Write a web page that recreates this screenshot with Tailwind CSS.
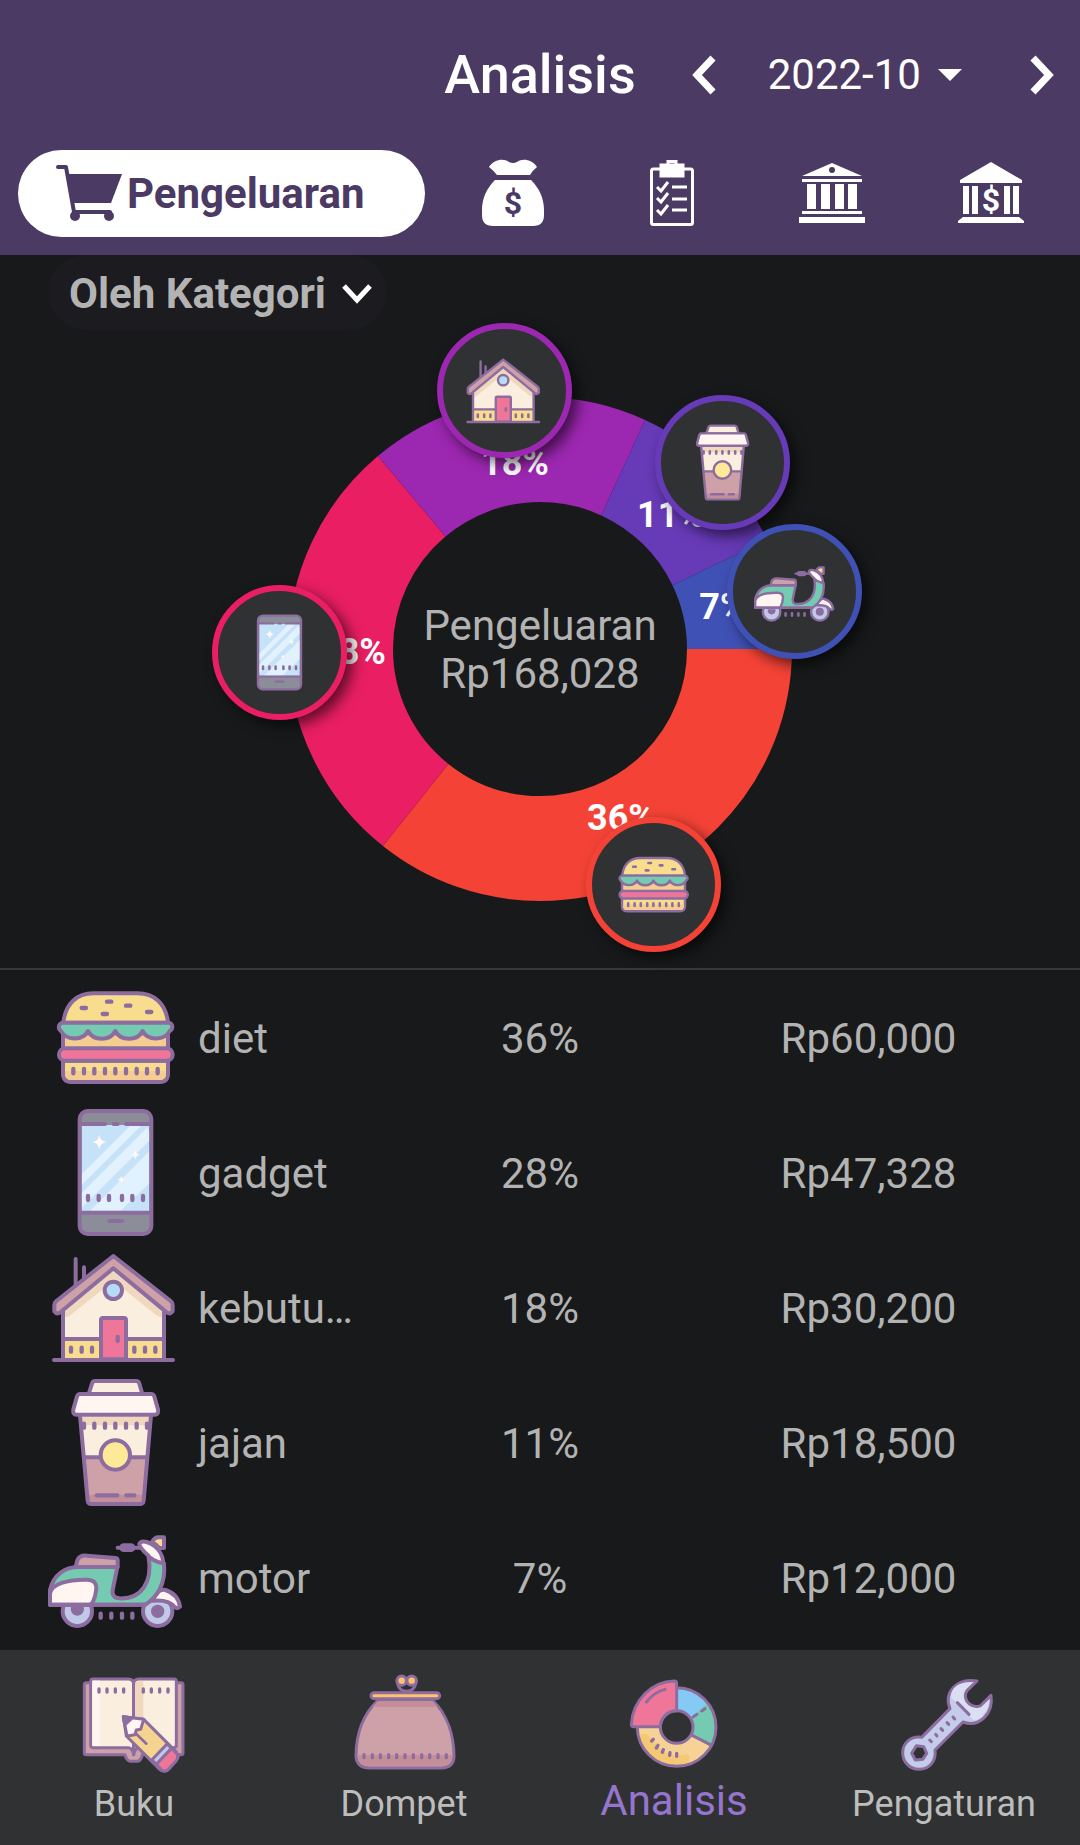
<!DOCTYPE html>
<html lang="id">
<head>
    <meta charset="UTF-8">
    <meta name="viewport" content="width=device-width, initial-scale=1.0">
    <title>Analisis</title>
    <script src="https://cdn.jsdelivr.net/npm/@tailwindcss/browser@4"></script>
</head>
<body class="flex min-h-screen flex-col bg-[#18191a] font-[Roboto,sans-serif] text-[42px] leading-[48px] text-[#b3b3b3]">

    <!-- icon sprite -->
    <svg class="absolute h-0 w-0" aria-hidden="true">
        <symbol id="burger" viewBox="54 0 405 405">
            <g stroke="#8d6d9f" stroke-width="12" stroke-linejoin="round" stroke-linecap="round">
                <path d="M99 190H414V240H99Z" fill="#f6cd90"/>
                <path d="M100 158C106 100 142 70 190 70H322C372 70 408 100 414 158Z" fill="#f9dd8f"/>
                <path d="M98 158C84 162 84 176 92 182C108 212 158 214 174 183C190 214 240 214 256 183C272 214 322 214 338 183C354 214 404 212 420 182C430 176 430 162 416 158Z" fill="#74cbb1"/>
                <path d="M99 272V310Q99 336 124 336H389Q414 336 414 310V272Z" fill="#f9dd8f"/>
                <rect x="87" y="235" width="341" height="37" rx="18" fill="#ef7699"/>
            </g>
            <path d="M105 303H408V312Q408 330 389 330H124Q105 330 105 312Z" fill="#f6cd90"/>
            <path d="M155 114h13M231 95h13M288 107h13M218 132h13M351 126h13M130 297v13M162 297v13M193 297v13M225 297v13M256 297v13M288 297v13M320 297v13M351 297v13M383 297v13" stroke="#8d6d9f" stroke-width="13" stroke-linecap="round"/>
        </symbol>
        <symbol id="phone" viewBox="54 405 405 405">
            <rect x="149" y="423" width="215" height="369" rx="24" fill="#8b8e99"/>
            <path d="M155 465H358V724H155Z" fill="#c6e2f8"/>
            <path d="M155 613L302 466H335L155 646ZM155 669L352 472L358 486V512L155 713ZM180 722L358 544V640L272 722Z" fill="#e1f1fe"/>
            <path d="M208 494Q211 513 230 516Q211 519 208 538Q205 519 186 516Q205 513 208 494ZM316 539Q318 552 330 554Q318 556 316 569Q314 556 302 554Q314 552 316 539ZM274 618Q276 627 285 629Q276 631 274 639Q272 631 264 629Q272 627 274 618Z" fill="#fff8f3"/>
            <g fill="none" stroke="#8d6d9f" stroke-width="12" stroke-linecap="round">
                <rect x="149" y="423" width="215" height="369" rx="24"/>
                <path d="M150 462H225M251 462h12M288 462H363M150 728H363M238 753h38"/>
                <path d="M174 678v12M206 678v12M237 678v12M276 678v12M307 678v12M339 678v12" stroke-width="13"/>
            </g>
        </symbol>
        <symbol id="house" viewBox="54 0 405 405">
            <path d="M99 205L250 85L402 205V358H99Z" fill="#faeede"/>
            <path d="M105 205L250 88L396 205V230Q388 234 378 225L250 122L122 225Q112 234 105 230Z" fill="#f0d8bf"/>
            <path d="M105 300H396V358H105Z" fill="#f9dd8f"/>
            <g fill="none" stroke="#8d6d9f" stroke-width="12" stroke-linejoin="round" stroke-linecap="round">
                <path d="M99 210V358M402 210V358M99 297H402M137 57V135M162 82V115"/>
                <path d="M250 48L422 183Q428 188 428 195V214Q420 224 410 217L250 85L91 217Q80 224 73 214V195Q73 188 79 183Z" fill="#cda1a7"/>
                <path d="M213 358V240Q213 234 219 234H282Q288 234 288 240V358Z" fill="#ef7699"/>
                <circle cx="250" cy="151" r="26" fill="#b5dbf7"/>
                <path d="M72 360H429"/>
                <path d="M263 291v12M123 323v12M155 323v12M186 323v12M313 323v12M345 323v12M376 323v12" stroke-width="13"/>
            </g>
        </symbol>
        <symbol id="cup" viewBox="54 405 405 405">
            <path d="M150 526L173 792H341L363 526Z" fill="#faeede"/>
            <path d="M155 530H358L357 556H158Z" fill="#f0d8bf"/>
            <path d="M162 652H352L341 788H173Z" fill="#cda1a7"/>
            <path d="M176 764H338L337 786H177Z" fill="#c48f99"/>
            <g fill="none" stroke="#8d6d9f" stroke-width="12" stroke-linejoin="round" stroke-linecap="round">
                <path d="M150 526L173 782Q174 792 182 792H332Q340 792 341 782L363 526M162 652H352"/>
                <path d="M176 462L186 431Q188 423 196 423H318Q326 423 328 431L337 462Z" fill="#faeede"/>
                <path d="M150 462H364Q370 462 373 469L384 508Q387 524 374 524H140Q127 524 130 508L141 469Q144 462 150 462Z" fill="#fff6f1"/>
                <circle cx="256" cy="645" r="44" fill="#fee999"/>
                <path d="M162 551v12M193 551v12M225 551v12M256 551v12M288 551v12M320 551v12M351 551v12M200 766h62M289 766h24" stroke-width="13"/>
            </g>
        </symbol>
        <symbol id="scooter" viewBox="54 0 405 405">
            <g fill="#c0c9e8" stroke="#8d6d9f" stroke-width="12" stroke-linejoin="round" stroke-linecap="round">
                <circle cx="142" cy="304" r="44"/>
                <circle cx="383" cy="304" r="44"/>
                <path d="M368 270Q382 236 406 240Q444 252 450 290Q442 298 434 291Q416 268 368 272Z" fill="#fff6f1"/>
                <path d="M60 284V240C70 195 105 171 145 171H262L248 240Q245 264 268 265C335 268 368 215 356 142L402 160C408 220 382 262 346 284Z" fill="#74cbb1"/>
                <path d="M60 284V250C66 222 110 208 172 209Q198 210 199 232Q197 258 190 272Q186 284 178 284Z" fill="#fff6f1"/>
                <path d="M137 171L142 151Q149 135 170 137L256 144Q263 145 263 151V171Z" fill="#cda1a7"/>
                <path d="M328 102Q332 92 350 96C380 106 398 130 400 160Q364 152 354 136Q330 114 328 102Z" fill="#fff6f1"/>
                <path d="M366 96Q374 82 384 82H402V114H388Q378 102 366 96Z" fill="#f9dd8f"/>
                <path d="M263 113H330"/>
                <path d="M281 113h22" stroke-width="26"/>
                <path d="M60 284H346"/>
                <path d="M212 311v12M244 311v12M276 311v12M307 311v12" stroke-width="13"/>
            </g>
            <path d="M123 291H161A20 20 0 1 1 123 291ZM363 304A20 20 0 1 1 403 304A20 20 0 1 1 363 304Z" fill="#8d6d9f"/>
        </symbol>
        <symbol id="book" viewBox="127 93 315 315">
            <g fill="#cda1a7" stroke="#8d6d9f" stroke-width="9" stroke-linejoin="round" stroke-linecap="round">
                <path d="M141 128H424Q430 128 430 134V338Q430 344 424 344H308Q304 364 292 364H272Q260 362 256 344H140Q134 344 134 338V134Q134 128 141 128Z"/>
                <path d="M153 124Q153 117 160 117H266Q281 117 282 132V344Q278 323 266 323H160Q153 323 153 316Z" fill="#faeede"/>
                <path d="M410 124Q410 117 403 117H298Q283 117 282 132V344Q286 323 298 323H403Q410 323 410 316Z" fill="#faeede"/>
            </g>
            <path d="M158 122H180V318H158Z" fill="#fff6f1"/>
            <path d="M288 124H311V235H288Z" fill="#f0d8bf"/>
            <path d="M178 147v9M202 147v9M227 147v9M252 147v9M311 147v9M335 147v9M360 147v9M385 147v9" stroke="#8d6d9f" stroke-width="10" stroke-linecap="round"/>
            <g fill="#f5d48f" stroke="#8d6d9f" stroke-width="9" stroke-linejoin="round" stroke-linecap="round">
                <path d="M251 230L312 238L408 334Q420 347 410 360L388 387Q374 400 360 388L260 288Z"/>
                <path d="M251 230L312 238L303 268L290 270L286 284L262 288Z" fill="#fff6f1"/>
                <path d="M251 230L278 234L256 254Z" fill="#8d6d9f"/>
                <path d="M382 312L337 359L350 373L396 325Z" fill="#c0c9e8"/>
                <path d="M396 325L350 373L364 388Q376 398 386 388L410 362Q419 350 410 340Z" fill="#ef7699"/>
                <path d="M290 282L320 311" stroke-width="8"/>
            </g>
        </symbol>
        <symbol id="purse" viewBox="937 93 315 315">
            <g fill="#cda1a7" stroke="#8d6d9f" stroke-width="9" stroke-linejoin="round" stroke-linecap="round">
                <path d="M1016 180C962 230 949 300 949 350Q952 384 990 384H1205Q1242 382 1243 350C1243 290 1225 225 1178 180Z"/>
                <path d="M955 345H1238Q1238 379 1205 379H990Q956 379 955 345ZM1014 184H1180L1194 201H998Z" fill="#c48f99" stroke="none"/>
                <path d="M1072 122Q1076 154 1101 154Q1126 154 1130 122Z" fill="#303133"/>
                <circle cx="1086" cy="122" r="14" fill="#ffc36c"/>
                <circle cx="1116" cy="122" r="14" fill="#ffc36c"/>
                <rect x="994" y="158" width="206" height="18" rx="9" fill="#ffc36c"/>
                <path d="M973 344v9M998 344v9M1022 344v9M1047 344v9M1071 344v9M1096 344v9M1121 344v9M1146 344v9M1170 344v9M1195 344v9M1220 344v9" stroke-width="10"/>
            </g>
        </symbol>
        <symbol id="pie" viewBox="187 93 315 315">
            <g fill="none" stroke="#8d6d9f" stroke-width="9" stroke-linejoin="round" stroke-linecap="round">
                <path d="M352 143A118 118 0 0 1 453 202L394 234A50 50 0 0 0 352 212Z" fill="#84caf5" stroke="none"/>
                <path d="M445 187A118 118 0 0 1 454 318L394 286A50 50 0 0 0 394 236Z" fill="#74cbb1" stroke="none"/>
                <path d="M234 261A117 117 0 0 0 456 315L395 284A50 50 0 0 1 302 261Z" fill="#f7d296" stroke="none"/>
                <path d="M239 284Q262 276 276 296Q318 362 380 342Q398 352 384 370Q330 386 280 352Q248 324 239 284Z" fill="#f4c874" stroke="none"/>
                <circle cx="351" cy="261" r="118"/>
                <circle cx="351" cy="261" r="49"/>
                <path d="M399 287L456 316M400 231l12-8M426 213l10-7"/>
                <path d="M344 123Q351 123 351 130V212A49 49 0 0 0 302 260H222Q214 260 215 252C220 180 275 125 344 123Z" fill="#ef7699"/>
                <path d="M260 186Q284 156 316 148"/>
                <path d="M281 298l-5 5M295 316l-5 8M311 329l-3 8M331 338l-1 8M351 340v9" stroke-width="10"/>
            </g>
        </symbol>
        <symbol id="wrench" viewBox="997 93 315 315">
            <g fill="#c3cce8" stroke="#8d6d9f" stroke-width="9" stroke-linejoin="round" stroke-linecap="round">
                <path d="M1086 292L1171 206C1152 158 1190 112 1252 123L1222 152Q1212 168 1222 184Q1236 204 1262 198L1294 166C1302 220 1260 264 1210 246L1126 330C1130 360 1112 388 1078 388C1050 388 1029 365 1029 338C1029 308 1055 287 1086 292Z"/>
                <path d="M1174 172C1172 142 1200 124 1240 127L1218 148Q1206 168 1217 187Q1236 210 1264 202L1290 178C1286 214 1266 238 1244 242Z" fill="#dadff4" stroke="none"/>
                <path d="M1070 317L1092 320L1101 340L1089 358L1067 360L1056 340Z" fill="#303133"/>
                <path d="M1193 188L1228 223M1110 300l5 5M1128 283l4 5M1144 266l5 5M1162 248l5 5M1180 231l5 6"/>
            </g>
        </symbol>
    </svg>

    <header class="bg-[#4b3a64] pb-[18px] text-white">
        <div class="grid h-[150px] grid-cols-[1fr_auto_1fr] items-center">
            <h1 class="col-start-2 text-[54px] leading-[60px] font-medium">Analisis</h1>
            <div class="flex items-center pr-[26px] pl-14">
                <button type="button" aria-label="Bulan sebelumnya">
                    <svg class="h-10 w-6" viewBox="0 0 24 40" fill="none" stroke="#fff" stroke-width="7"><path d="M21 3L5 20L21 37"/></svg>
                </button>
                <label class="relative ml-[52px]">
                    <select aria-label="Bulan" class="h-16 w-[194px] appearance-none">
                        <option>2022-10</option>
                        <option>2022-09</option>
                    </select>
                    <svg class="pointer-events-none absolute top-[26px] right-0 h-3 w-6" viewBox="0 0 24 12" fill="#fff"><path d="M0 0H24L12 12Z"/></svg>
                </label>
                <button type="button" aria-label="Bulan berikutnya" class="ml-auto">
                    <svg class="h-10 w-6" viewBox="0 0 24 40" fill="none" stroke="#fff" stroke-width="7"><path d="M3 3L19 20L3 37"/></svg>
                </button>
            </div>
        </div>

        <div class="flex pr-[9px] pl-[18px]">
            <button type="button" class="mr-2 flex h-[87px] w-[407px] items-center gap-[3px] rounded-full bg-white pl-[38px] font-bold text-[#4b3a64]">
                <svg class="h-[60px] w-[68px]" viewBox="0 0 68 60" fill="currentColor">
                    <path d="M2 3H10L18 48H54" fill="none" stroke="currentColor" stroke-width="4" stroke-linecap="round" stroke-linejoin="round"/>
                    <path d="M12 10H66L55 39H17Z"/>
                    <circle cx="19" cy="52" r="5"/>
                    <circle cx="53" cy="52" r="5"/>
                </svg>
                Pengeluaran
            </button>
            <button type="button" aria-label="Pemasukan" class="flex flex-1 items-center justify-center pb-1">
                <svg class="size-[72px]" viewBox="0 0 72 72" fill="#fff">
                    <path d="M12 11C17 3 27 2 32 6Q36 8 40 6C45 2 55 3 60 11Q55 15 53 19H20Q17 15 12 11ZM18 24H54C62 32 67 42 67 54V59Q67 70 56 70H16Q5 70 5 59V54C5 42 10 32 18 24Z"/>
                    <text x="36" y="58" font-size="32" font-weight="700" text-anchor="middle" fill="#4b3a64">$</text>
                </svg>
            </button>
            <button type="button" aria-label="Anggaran" class="flex flex-1 items-center justify-center pb-1">
                <svg class="size-[72px]" viewBox="0 0 72 72" fill="none" stroke="#fff" stroke-width="3">
                    <rect x="15.500" y="13" width="41" height="55.500" rx="2"/>
                    <path d="M32 10V5.500H40V10"/>
                    <path d="M25 9H47V20H25Z" fill="#fff"/>
                    <path d="M21 31L25 35L32 26M21 42L25 46L32 37M21 54L25 58L32 49M36 31H51M36 43H51M36 54H51"/>
                </svg>
            </button>
            <button type="button" aria-label="Bank" class="flex flex-1 items-center justify-center pb-1">
                <svg class="size-[72px]" viewBox="0 0 72 72" fill="#fff">
                    <path d="M36 7L66 20H6ZM6 23H66V26H6ZM11 28H20V53H11ZM25 28H34V53H25ZM39 28H48V53H39ZM52 28H61V53H52ZM6 55H66V58H6ZM3 61H69V67H3Z"/>
                    <circle cx="36" cy="14" r="3" fill="#4b3a64"/>
                </svg>
            </button>
            <button type="button" aria-label="Pinjaman" class="flex flex-1 items-center justify-center pb-1">
                <svg class="size-[72px]" viewBox="0 0 72 72" fill="#fff">
                    <path d="M36 6L67 24V27H5V24ZM8 30H14V58H8ZM17 30H23V58H17ZM49 30H55V58H49ZM58 30H64V58H58ZM3 67V65L8 61H64L69 65V67Z"/>
                    <text x="36" y="55" font-size="32" font-weight="700" text-anchor="middle">$</text>
                </svg>
            </button>
        </div>
    </header>

    <main class="flex-1">
        <section class="border-b-2 border-[#38393b] pb-[67px]">
            <label class="relative ml-12 flex h-[75px] w-[339px] rounded-full bg-[#1c1b1f]">
                <select aria-label="Kelompokkan" class="w-full appearance-none rounded-full pt-0.5 pl-[21px] font-bold">
                    <option>Oleh Kategori</option>
                </select>
                <svg class="pointer-events-none absolute top-[29px] right-[15px] h-5 w-[30px]" viewBox="0 0 30 20" fill="none" stroke="#fff" stroke-width="5"><path d="M2 2L15 16L28 2"/></svg>
            </label>

            <!-- donut: slices run clockwise from 3 o'clock -->
            <div class="relative mx-auto mt-[67px] size-[504px]">
                <svg class="size-full" viewBox="0 0 504 504">
                    <g fill="none" stroke-width="105">
                        <circle cx="252" cy="252" r="199.500" pathLength="1000" stroke="#f44336" stroke-dasharray="357.100 1000"/>
                        <circle cx="252" cy="252" r="199.500" pathLength="1000" stroke="#e91e63" stroke-dasharray="281.700 1000" stroke-dashoffset="-357.100"/>
                        <circle cx="252" cy="252" r="199.500" pathLength="1000" stroke="#9c27b0" stroke-dasharray="179.700 1000" stroke-dashoffset="-638.800"/>
                        <circle cx="252" cy="252" r="199.500" pathLength="1000" stroke="#673ab7" stroke-dasharray="110.100 1000" stroke-dashoffset="-818.500"/>
                        <circle cx="252" cy="252" r="199.500" pathLength="1000" stroke="#3f51b5" stroke-dasharray="71.400 1000" stroke-dashoffset="-928.600"/>
                    </g>
                    <g fill="#fff" font-size="36" font-weight="700" text-anchor="middle">
                        <text x="333" y="433">36%</text>
                        <text x="64" y="267">28%</text>
                        <text x="227" y="78">18%</text>
                        <text x="383" y="130">11%</text>
                        <text x="435" y="222">7%</text>
                    </g>
                </svg>
                <div class="absolute inset-0 flex flex-col items-center justify-center pt-0.5">
                    <span>Pengeluaran</span>
                    <span>Rp168,028</span>
                </div>
                <div class="absolute top-[420px] left-[298px] flex size-[135px] items-center justify-center rounded-full border-[6px] border-[#f44336] bg-[#303133] shadow-[6px_6px_14px_rgba(0,0,0,0.6)]">
                    <svg class="size-[81px]"><use href="#burger"/></svg>
                </div>
                <div class="absolute top-[188px] -left-[76px] flex size-[135px] items-center justify-center rounded-full border-[6px] border-[#e91e63] bg-[#303133] shadow-[6px_6px_14px_rgba(0,0,0,0.6)]">
                    <svg class="size-[81px]"><use href="#phone"/></svg>
                </div>
                <div class="absolute -top-[74px] left-[149px] flex size-[135px] items-center justify-center rounded-full border-[6px] border-[#9c27b0] bg-[#303133] shadow-[6px_6px_14px_rgba(0,0,0,0.6)]">
                    <svg class="size-[81px]"><use href="#house"/></svg>
                </div>
                <div class="absolute -top-0.5 left-[367px] flex size-[135px] items-center justify-center rounded-full border-[6px] border-[#673ab7] bg-[#303133] shadow-[6px_6px_14px_rgba(0,0,0,0.6)]">
                    <svg class="size-[81px]"><use href="#cup"/></svg>
                </div>
                <div class="absolute top-[127px] left-[439px] flex size-[135px] items-center justify-center rounded-full border-[6px] border-[#3f51b5] bg-[#303133] shadow-[6px_6px_14px_rgba(0,0,0,0.6)]">
                    <svg class="size-[81px]"><use href="#scooter"/></svg>
                </div>
            </div>
        </section>

        <table class="w-full table-fixed text-center">
            <colgroup>
                <col class="w-[37.5%]">
                <col class="w-[25%]">
                <col class="w-[37.5%]">
            </colgroup>
            <tbody>
                <tr>
                    <td class="p-0">
                        <div class="flex h-[135px] items-center gap-[11px] pr-10 pl-12 text-left">
                            <svg class="size-[135px] shrink-0"><use href="#burger"/></svg>
                            <span class="truncate pt-0.5 pl-1">diet</span>
                        </div>
                    </td>
                    <td class="pt-0.5">36%</td>
                    <td class="pt-0.5 pr-[18px]">Rp60,000</td>
                </tr>
                <tr>
                    <td class="p-0">
                        <div class="flex h-[135px] items-center gap-[11px] pr-10 pl-12 text-left">
                            <svg class="size-[135px] shrink-0"><use href="#phone"/></svg>
                            <span class="truncate pt-0.5 pl-1">gadget</span>
                        </div>
                    </td>
                    <td class="pt-0.5">28%</td>
                    <td class="pt-0.5 pr-[18px]">Rp47,328</td>
                </tr>
                <tr>
                    <td class="p-0">
                        <div class="flex h-[135px] items-center gap-[11px] pr-10 pl-12 text-left">
                            <svg class="size-[135px] shrink-0"><use href="#house"/></svg>
                            <span class="truncate pt-0.5 pl-1">kebutu…</span>
                        </div>
                    </td>
                    <td class="pt-0.5">18%</td>
                    <td class="pt-0.5 pr-[18px]">Rp30,200</td>
                </tr>
                <tr>
                    <td class="p-0">
                        <div class="flex h-[135px] items-center gap-[11px] pr-10 pl-12 text-left">
                            <svg class="size-[135px] shrink-0"><use href="#cup"/></svg>
                            <span class="truncate pt-0.5 pl-1">jajan</span>
                        </div>
                    </td>
                    <td class="pt-0.5">11%</td>
                    <td class="pt-0.5 pr-[18px]">Rp18,500</td>
                </tr>
                <tr>
                    <td class="p-0">
                        <div class="flex h-[135px] items-center gap-[11px] pr-10 pl-12 text-left">
                            <svg class="size-[135px] shrink-0"><use href="#scooter"/></svg>
                            <span class="truncate pt-0.5 pl-1">motor</span>
                        </div>
                    </td>
                    <td class="pt-0.5">7%</td>
                    <td class="pt-0.5 pr-[18px]">Rp12,000</td>
                </tr>
            </tbody>
        </table>
    </main>

    <nav class="grid h-[195px] grid-cols-4 bg-[#303133] pt-[21px] text-[36px] text-[#bdbdbd]">
        <a href="#buku" class="flex flex-col items-center gap-1 pr-0.5">
            <svg class="size-[105px]"><use href="#book"/></svg>
            <span>Buku</span>
        </a>
        <a href="#dompet" class="flex flex-col items-center gap-1 pr-0.5">
            <svg class="size-[105px]"><use href="#purse"/></svg>
            <span>Dompet</span>
        </a>
        <a href="#analisis" class="flex flex-col items-center gap-1 pr-0.5 text-[42px] leading-[42px] text-[#9575cd]">
            <svg class="size-[105px]"><use href="#pie"/></svg>
            <span>Analisis</span>
        </a>
        <a href="#pengaturan" class="flex flex-col items-center gap-1 pr-0.5">
            <svg class="size-[105px]"><use href="#wrench"/></svg>
            <span>Pengaturan</span>
        </a>
    </nav>

</body>
</html>
